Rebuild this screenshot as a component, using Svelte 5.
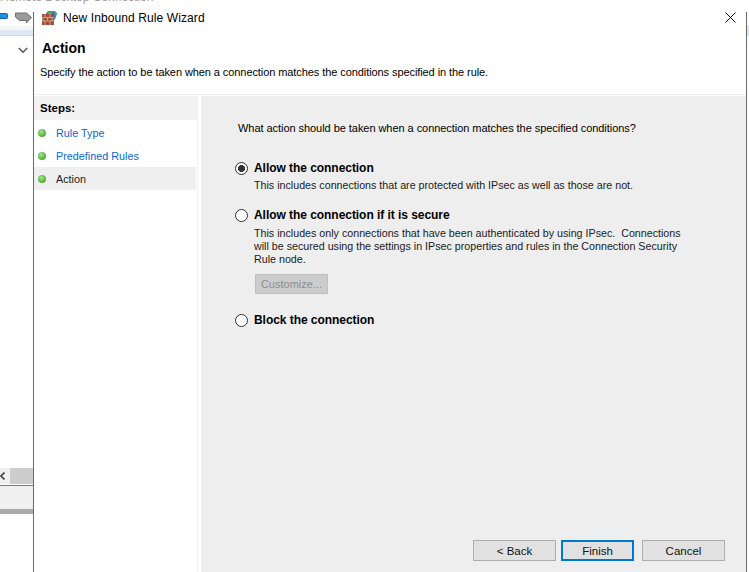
<script>
  const steps = [
    { label: "Rule Type", current: false },
    { label: "Predefined Rules", current: false },
    { label: "Action", current: true },
  ];
</script>

<div class="screen">
  <!-- caption of the window behind, nearly scrolled off the top -->
  <div class="caption"><span>Remote Desktop Connection</span></div>

  <div class="row">
    <div class="behind">
      <div class="toolbar">
        <span class="tool-blue"></span>
        <svg class="tool-arrow" width="17" height="12" viewBox="0 0 17 12">
          <path d="M.5 1h11l5 4.500-5 5.500V8.500H4.500L.5 5z" fill="#9b9b9b" stroke="#6f6f6f" />
        </svg>
      </div>
      <div class="tree-head"></div>
      <div class="chevron">
        <svg width="10" height="7" viewBox="0 0 10 7">
          <path d="M.8 1l4.200 4.200L9.200 1" fill="none" stroke="#555" stroke-width="1.500" />
        </svg>
      </div>
      <div class="spacer"></div>
      <div class="hscroll">
        <svg class="hscroll-arrow" width="5" height="8" viewBox="0 0 5 8">
          <path d="M4.500.5L1 4l3.500 3.500" fill="none" stroke="#444" stroke-width="1.600" />
        </svg>
        <div class="hscroll-track"></div>
      </div>
      <div class="status"></div>
      <div class="status-edge"></div>
    </div>

    <div class="wizard">
      <header class="titlebar">
        <svg class="fw-icon" width="16" height="14" viewBox="0 0 16 14">
          <path d="M4 3.500a5.500 3.500 0 0 1 11-1l-2 6H5z" fill="#2f7fd6" />
          <path d="M5 3.500Q6 .5 9 .5l1 3zM12 1l3 1.500-1 2.500z" fill="#4fb83f" />
          <path d="M0 3h12v11H0z" fill="#9c4f38" />
          <path d="M0 6.500h12M0 10h12M3 3v3.500M8 3v3.500M1 6.500V10M5.500 6.500V10M10 6.500V10M3 10v4M8 10v4" stroke="#d9b3a0" stroke-width=".8" fill="none" />
        </svg>
        <span class="title">New Inbound Rule Wizard</span>
        <svg class="close" width="11" height="11" viewBox="0 0 11 11">
          <path d="M.5.5l10 10M10.500.5l-10 10" stroke="#111" stroke-width="1" fill="none" />
        </svg>
      </header>

      <section class="intro">
        <h1>Action</h1>
        <p>Specify the action to be taken when a connection matches the conditions specified in the rule.</p>
      </section>

      <div class="main">
        <nav class="steps">
          <div class="steps-head">Steps:</div>
          <ul>
            {#each steps as step}
              <li class:current={step.current}>
                <span class="dot"></span>
                <span>{step.label}</span>
              </li>
            {/each}
          </ul>
        </nav>

        <div class="pane">
          <p class="question">What action should be taken when a connection matches the specified conditions?</p>

          <label class="option first">
            <input type="radio" name="action" checked />
            <span>Allow the connection</span>
          </label>
          <p class="desc">This includes connections that are protected with IPsec as well as those are not.</p>

          <label class="option second">
            <input type="radio" name="action" />
            <span>Allow the connection if it is secure</span>
          </label>
          <p class="desc lower">
            This includes only connections that have been authenticated by using IPsec.&nbsp; Connections<br />
            will be secured using the settings in IPsec properties and rules in the Connection Security<br />
            Rule node.
          </p>
          <button class="customize" disabled>Customize...</button>

          <label class="option third">
            <input type="radio" name="action" />
            <span>Block the connection</span>
          </label>

          <div class="buttons">
            <button class="btn">&lt; Back</button>
            <button class="btn finish">Finish</button>
            <button class="btn cancel">Cancel</button>
          </div>
        </div>
      </div>
    </div>

    <div class="edge">
      <div class="edge-band"></div>
    </div>
  </div>
</div>

<style>
  :global(body) {
    margin: 0;
    background: #fff;
  }
  .screen {
    width: 749px;
    height: 572px;
    display: flex;
    flex-direction: column;
    overflow: hidden;
    font-family: "Liberation Sans", Arial, sans-serif;
    font-size: 11px;
    color: #000;
  }
  .caption {
    height: 12px;
    flex: none;
    overflow: hidden;
  }
  .caption span {
    display: block;
    margin-top: -10px;
    font-size: 12px;
    line-height: 14px;
    color: #a09a9c;
    white-space: nowrap;
  }
  .row {
    flex: 1;
    min-height: 0;
    display: flex;
  }

  .behind {
    width: 33px;
    flex: none;
    display: flex;
    flex-direction: column;
    overflow: hidden;
  }
  .toolbar {
    height: 14px;
    flex: none;
    display: flex;
    align-items: flex-start;
  }
  .tool-blue {
    width: 8px;
    height: 6px;
    margin-top: 1px;
    background: #1f8fe0;
    border: 1px solid #0f6cb8;
    border-left: 0;
    border-radius: 0 2px 2px 0;
    box-sizing: border-box;
    flex: none;
  }
  .tool-arrow {
    margin-left: 7px;
    flex: none;
  }
  .tree-head {
    height: 10px;
    background: linear-gradient(#f6f6f6 0 50%, #dfe8f3 50%);
    border-bottom: 1px solid #cdd6e0;
    box-sizing: border-box;
    flex: none;
  }
  .chevron {
    height: 20px;
    padding: 8px 0 0 18px;
    box-sizing: border-box;
    flex: none;
  }
  .spacer {
    flex: 1;
  }
  .hscroll {
    height: 16px;
    margin-bottom: 1px;
    display: flex;
    align-items: center;
    background: #f0f0f0;
    flex: none;
  }
  .hscroll-arrow {
    flex: none;
    margin-right: 5px;
  }
  .hscroll-track {
    flex: 1;
    height: 100%;
    background: #cdcdcd;
  }
  .status {
    height: 24px;
    background: #f0f0f0;
    border-top: 1px solid #7c7c7c;
    box-sizing: border-box;
    flex: none;
  }
  .status-edge {
    height: 5px;
    margin-bottom: 58px;
    background: #a9a9a9;
    flex: none;
  }

  .wizard {
    flex: 1;
    min-width: 0;
    display: flex;
    flex-direction: column;
    background: #fff;
    border-left: 1px solid #6a6a6a;
    border-right: 1px solid #6a6a6a;
  }
  .titlebar {
    height: 20px;
    flex: none;
    display: flex;
    align-items: center;
    padding: 0 0 9px 8px;
    box-sizing: border-box;
  }
  .fw-icon {
    flex: none;
    margin-right: 5px;
  }
  .title {
    font-size: 12px;
    flex: 1;
    letter-spacing: 0.1px;
  }
  .close {
    flex: none;
    margin-right: 10px;
  }
  .intro {
    height: 63px;
    flex: none;
    box-sizing: border-box;
    padding-top: 8px;
    border-bottom: 1px solid #ededed;
  }
  .intro h1 {
    margin: 0 0 0 8px;
    font-size: 14px;
    line-height: 16px;
    font-weight: 700;
  }
  .intro p {
    margin: 9px 0 0 6px;
    font-size: 11px;
    line-height: 14px;
    letter-spacing: -0.08px;
  }

  .main {
    flex: 1;
    min-height: 0;
    display: flex;
    padding-top: 1px;
  }
  .steps {
    width: 163px;
    flex: none;
    border-right: 1px solid #f2f2f2;
  }
  .steps-head {
    height: 24px;
    line-height: 25px;
    padding-left: 6px;
    font-weight: 700;
    font-size: 11.500px;
    background: #f2f2f2;
    margin-bottom: 1px;
  }
  .steps ul {
    list-style: none;
    margin: 0;
    padding: 0;
  }
  .steps li {
    height: 23px;
    display: flex;
    align-items: center;
    margin-right: 1px;
    padding-left: 4px;
    color: #0a68d0;
    font-size: 10.800px;
  }
  .steps li.current {
    background: #efefef;
    color: #222;
  }
  .dot {
    width: 8px;
    height: 8px;
    border-radius: 50%;
    background: radial-gradient(circle at 40% 35%, #a6e58e, #45a92f 75%);
    margin-right: 10px;
    flex: none;
  }

  .pane {
    flex: 1;
    min-width: 0;
    margin-left: 3px;
    background: #eeeeee;
    display: flex;
    flex-direction: column;
    padding-left: 37px;
    box-sizing: border-box;
  }
  .question {
    margin: 25px 0 0 0;
    font-size: 11px;
    line-height: 14px;
    letter-spacing: -0.05px;
  }
  .option {
    display: flex;
    align-items: center;
    height: 16px;
    font-weight: 700;
    font-size: 12px;
    letter-spacing: -0.05px;
  }
  .option input {
    appearance: none;
    width: 13px;
    height: 13px;
    margin: 0 6px 0 -3px;
    border: 1px solid #333;
    border-radius: 50%;
    background: #fff;
    box-sizing: border-box;
    flex: none;
  }
  .option input:checked {
    background: radial-gradient(circle, #333 0 3.200px, #fff 3.800px);
  }
  .option.first {
    margin-top: 25px;
  }
  .option.second {
    margin-top: 15px;
  }
  .option.third {
    margin-top: 18px;
  }
  .desc {
    margin: 3px 0 0 16px;
    font-size: 10.700px;
    line-height: 13px;
    color: #1a1a1a;
    white-space: nowrap;
  }
  .desc.lower {
    margin-top: 4px;
  }
  .customize {
    width: 73px;
    height: 20px;
    margin: 8px 0 0 17px;
    padding: 0;
    background: #cccccc;
    border: 1px solid #bfbfbf;
    color: #8c8c8c;
    font: 11px "Liberation Sans", Arial, sans-serif;
    flex: none;
  }
  .buttons {
    margin-top: auto;
    margin-bottom: 11px;
    margin-right: 21px;
    display: flex;
    justify-content: flex-end;
  }
  .btn {
    width: 83px;
    height: 21px;
    padding: 0;
    background: #e1e1e1;
    border: 1px solid #adadad;
    color: #111;
    font: 11.500px "Liberation Sans", Arial, sans-serif;
    box-sizing: border-box;
  }
  .finish {
    width: 73px;
    margin-left: 5px;
    border: 2px solid #0078d7;
  }
  .cancel {
    margin-left: 8px;
  }

  .edge {
    width: 2px;
    flex: none;
    padding-top: 13px;
  }
  .edge-band {
    height: 11px;
    background: #dbe6f2;
  }
</style>
